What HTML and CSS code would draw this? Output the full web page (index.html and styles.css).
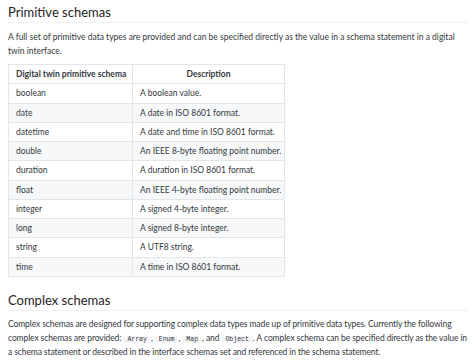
FILE: index.html
```html
<!DOCTYPE html>
<html lang="en">
<head>
  <meta charset="UTF-8">
  <title>Primitive schemas</title>
  <link rel="stylesheet" href="styles.css">
</head>
<body>
  <article class="markdown">
    <h2>Primitive schemas</h2>
    <p>A full set of primitive data types are provided and can be specified directly as the value in a schema statement in a digital twin interface.</p>

    <table>
      <thead>
        <tr>
          <th class="left">Digital twin primitive schema</th>
          <th>Description</th>
        </tr>
      </thead>
      <tbody>
        <tr><td>boolean</td><td>A boolean value.</td></tr>
        <tr><td>date</td><td>A date in ISO 8601 format.</td></tr>
        <tr><td>datetime</td><td>A date and time in ISO 8601 format.</td></tr>
        <tr><td>double</td><td>An IEEE 8-byte floating point number.</td></tr>
        <tr><td>duration</td><td>A duration in ISO 8601 format.</td></tr>
        <tr><td>float</td><td>An IEEE 4-byte floating point number.</td></tr>
        <tr><td>integer</td><td>A signed 4-byte integer.</td></tr>
        <tr><td>long</td><td>A signed 8-byte integer.</td></tr>
        <tr><td>string</td><td>A UTF8 string.</td></tr>
        <tr><td>time</td><td>A time in ISO 8601 format.</td></tr>
      </tbody>
    </table>

    <h2>Complex schemas</h2>
    <p class="tight">Complex schemas are designed for supporting complex data types made up of primitive data types. Currently the following complex schemas are provided: <code>Array</code>, <code>Enum</code>, <code>Map</code>, and <code>Object</code>. A complex schema can be specified directly as the value in a schema statement or described in the interface schemas set and referenced in the schema statement.</p>
  </article>
</body>
</html>
```

FILE: styles.css
```css
* {
  box-sizing: border-box;
}

body {
  margin: 0;
  padding: 0 6px 0 8px;
  background: #fff;
  color: #34383c;
  font-family: Lato, 'Noto Sans', sans-serif;
  font-size: 8.5px;
  line-height: 14px;
}

.markdown h2 {
  margin: 0;
  padding: 5px 0 2px;
  font-size: 13px;
  line-height: 15px;
  font-weight: 400;
  color: #1f2326;
  border-bottom: 1px solid #eef0f2;
}

.markdown p {
  margin: 7px 0 6px;
}

.markdown p.tight {
  margin-top: 6px;
  letter-spacing: -0.1px;
}

table {
  border-collapse: collapse;
  table-layout: fixed;
  width: 277px;
  margin-bottom: 11px;
}

th,
td {
  border: 1px solid #e3e6e9;
  padding: 3px 7px;
  line-height: 12.27px;
  text-align: left;
  white-space: nowrap;
}

th {
  font-weight: 700;
  text-align: center;
}

th.left {
  width: 124px;
  text-align: left;
}

tbody tr:nth-child(even) {
  background: #f6f8fa;
}

code {
  font-family: 'Liberation Mono', monospace;
  font-size: 6.5px;
  line-height: 1;
  letter-spacing: 0;
  padding: 0 4px;
  background: #f3f4f5;
  border-radius: 2px;
}
```
